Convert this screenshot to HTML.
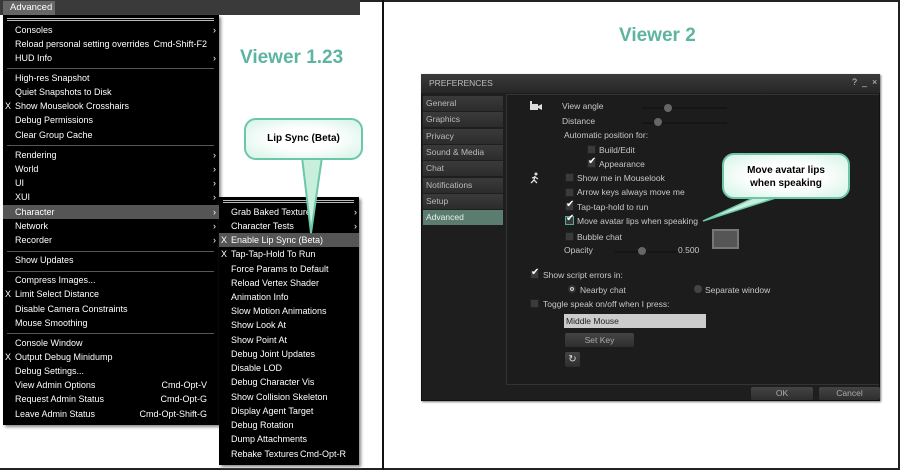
<!DOCTYPE html>
<html><head><meta charset="utf-8"><style>
*{margin:0;padding:0;box-sizing:border-box}
body{width:900px;height:470px;background:#fff;position:relative;overflow:hidden;font-family:"Liberation Sans",sans-serif}
.a{position:absolute}
.m{position:absolute;color:#fff;font-size:9px;line-height:14px;white-space:nowrap;top:0}
.r{position:absolute;color:#fff;font-size:9px;line-height:14px;white-space:nowrap;text-align:right}
.sep{position:absolute;height:1px;background:#555}
.p{position:absolute;color:#c8c8c8;font-size:8.5px;white-space:nowrap;line-height:11px}
.cb{position:absolute;width:9px;height:9px;background:#3a3a3a;border:1px solid #222}
.ck::after{content:"✔";position:absolute;left:0;top:-4px;color:#fff;font-size:10px}
.tab{position:absolute;left:423px;width:80px;height:15px;background:linear-gradient(#3a3a3a,#2c2c2c);color:#bbb;font-size:8.5px;line-height:15px;padding-left:3px}
.sl{position:absolute;height:2px;background:#151515}
.kn{position:absolute;width:8px;height:8px;border-radius:50%;background:#666}
.btn{position:absolute;background:linear-gradient(#444,#2e2e2e);color:#aaa;font-size:8.5px;text-align:center;border-radius:2px}
.v{position:absolute;color:#5db4a0;font-weight:bold}
.cl{position:absolute;border:2px solid #6cc7a8;border-radius:12px;background:radial-gradient(ellipse at center,#fff 40%,#d4f3e6 100%);font-weight:bold;font-size:10px;color:#000;text-align:center}
</style></head><body>
<div class="a" style="left:0;top:0;width:900px;height:470px;border:2px solid #222;border-left:none"></div>
<div class="a" style="left:382px;top:0;width:2px;height:470px;background:#111"></div>
<div class="a" style="left:0;top:0;width:360px;height:15px;background:#3a3a3a"></div>
<div class="a" style="left:3px;top:1px;width:52px;height:14px;background:#666;color:#fff;font-size:9.5px;line-height:14px;padding-left:7px">Advanced</div>
<div class="a" style="left:3px;top:15px;width:216px;height:410px;background:#000;box-shadow:2px 2px 3px #888"></div>
<div class="a" style="left:7px;top:18px;width:207px;height:3px;border-top:1px solid #bbb;border-bottom:1px solid #bbb"></div>
<div class="a" style="left:3px;top:205px;width:216px;height:14px;background:#555"></div>
<div class="sep" style="left:7px;top:68px;width:207px"></div>
<div class="sep" style="left:7px;top:145px;width:207px"></div>
<div class="sep" style="left:7px;top:251px;width:207px"></div>
<div class="sep" style="left:7px;top:271px;width:207px"></div>
<div class="sep" style="left:7px;top:333px;width:207px"></div>
<div class="m" style="left:15px;top:23px">Consoles</div>
<div class="m" style="left:15px;top:37px">Reload personal setting overrides</div>
<div class="r" style="right:693px;top:37px">Cmd-Shift-F2</div>
<div class="m" style="left:15px;top:51px">HUD Info</div>
<div class="m" style="left:15px;top:71px">High-res Snapshot</div>
<div class="m" style="left:15px;top:85px">Quiet Snapshots to Disk</div>
<div class="m" style="left:5px;top:99px">X</div><div class="m" style="left:15px;top:99px">Show Mouselook Crosshairs</div>
<div class="m" style="left:15px;top:113px">Debug Permissions</div>
<div class="m" style="left:15px;top:128px">Clear Group Cache</div>
<div class="m" style="left:15px;top:148px">Rendering</div>
<div class="m" style="left:15px;top:162px">World</div>
<div class="m" style="left:15px;top:176px">UI</div>
<div class="m" style="left:15px;top:190px">XUI</div>
<div class="m" style="left:15px;top:205px">Character</div>
<div class="m" style="left:15px;top:219px">Network</div>
<div class="m" style="left:15px;top:233px">Recorder</div>
<div class="m" style="left:15px;top:253px">Show Updates</div>
<div class="m" style="left:15px;top:273px">Compress Images...</div>
<div class="m" style="left:5px;top:287px">X</div><div class="m" style="left:15px;top:287px">Limit Select Distance</div>
<div class="m" style="left:15px;top:302px">Disable Camera Constraints</div>
<div class="m" style="left:15px;top:316px">Mouse Smoothing</div>
<div class="m" style="left:15px;top:336px">Console Window</div>
<div class="m" style="left:5px;top:350px">X</div><div class="m" style="left:15px;top:350px">Output Debug Minidump</div>
<div class="m" style="left:15px;top:364px">Debug Settings...</div>
<div class="m" style="left:15px;top:378px">View Admin Options</div>
<div class="m" style="left:15px;top:392px">Request Admin Status</div>
<div class="m" style="left:15px;top:407px">Leave Admin Status</div>
<div class="r" style="right:693px;top:378px">Cmd-Opt-V</div>
<div class="r" style="right:693px;top:392px">Cmd-Opt-G</div>
<div class="r" style="right:693px;top:407px">Cmd-Opt-Shift-G</div>
<div class="m" style="left:213px;top:23px">›</div><div class="m" style="left:213px;top:51px">›</div>
<div class="m" style="left:213px;top:148px">›</div><div class="m" style="left:213px;top:162px">›</div>
<div class="m" style="left:213px;top:176px">›</div><div class="m" style="left:213px;top:190px">›</div>
<div class="m" style="left:213px;top:205px">›</div><div class="m" style="left:213px;top:219px">›</div>
<div class="m" style="left:213px;top:233px">›</div>
<div class="a" style="left:219px;top:197px;width:140px;height:268px;background:#000;box-shadow:2px 2px 3px #888"></div>
<div class="a" style="left:223px;top:200px;width:131px;height:3px;border-top:1px solid #bbb;border-bottom:1px solid #bbb"></div>
<div class="a" style="left:219px;top:233px;width:140px;height:14px;background:#555"></div>
<div class="m" style="left:231px;top:205px">Grab Baked Texture</div>
<div class="m" style="left:231px;top:219px">Character Tests</div>
<div class="m" style="left:354px;top:205px">›</div><div class="m" style="left:354px;top:219px">›</div>
<div class="m" style="left:221px;top:233px">X</div><div class="m" style="left:231px;top:233px">Enable Lip Sync (Beta)</div>
<div class="m" style="left:221px;top:247px">X</div><div class="m" style="left:231px;top:247px">Tap-Tap-Hold To Run</div>
<div class="m" style="left:231px;top:262px">Force Params to Default</div>
<div class="m" style="left:231px;top:276px">Reload Vertex Shader</div>
<div class="m" style="left:231px;top:290px">Animation Info</div>
<div class="m" style="left:231px;top:304px">Slow Motion Animations</div>
<div class="m" style="left:231px;top:318px">Show Look At</div>
<div class="m" style="left:231px;top:333px">Show Point At</div>
<div class="m" style="left:231px;top:347px">Debug Joint Updates</div>
<div class="m" style="left:231px;top:361px">Disable LOD</div>
<div class="m" style="left:231px;top:375px">Debug Character Vis</div>
<div class="m" style="left:231px;top:390px">Show Collision Skeleton</div>
<div class="m" style="left:231px;top:404px">Display Agent Target</div>
<div class="m" style="left:231px;top:418px">Debug Rotation</div>
<div class="m" style="left:231px;top:432px">Dump Attachments</div>
<div class="m" style="left:231px;top:447px">Rebake Textures</div>
<div class="r" style="right:554px;top:447px">Cmd-Opt-R</div>
<div class="v" style="left:240px;top:47px;font-size:19px">Viewer 1.23</div>
<div class="v" style="left:619px;top:25px;font-size:19px">Viewer 2</div>
<svg class="a" style="left:240px;top:115px" width="130" height="125"><polygon points="62,42 82,42 71,118" fill="#c8eedc" stroke="#6cc7a8" stroke-width="2"/></svg>
<div class="cl" style="left:244px;top:118px;width:119px;height:42px;line-height:38px">Lip Sync (Beta)</div>
<div class="a" style="left:421px;top:74px;width:459px;height:327px;background:#1e1e1e;border:1px solid #111;box-shadow:1px 1px 2px #777"></div>
<div class="a" style="left:421px;top:74px;width:459px;height:19px;background:linear-gradient(#3a3a3a,#262626)"></div>
<div class="p" style="left:429px;top:78px;color:#bbb">PREFERENCES</div>
<div class="p" style="left:852px;top:77px;color:#ccc;font-size:9px">?&nbsp; _&nbsp; ×</div>
<div class="a" style="left:506px;top:94px;width:373px;height:290px;border-left:1px solid #333;border-top:1px solid #333;background:#1c1c1c"></div>
<div class="tab" style="top:96px">General</div>
<div class="tab" style="top:112px">Graphics</div>
<div class="tab" style="top:129px">Privacy</div>
<div class="tab" style="top:145px">Sound &amp; Media</div>
<div class="tab" style="top:161px">Chat</div>
<div class="tab" style="top:178px">Notifications</div>
<div class="tab" style="top:194px">Setup</div>
<div class="tab" style="top:210px;background:#5a7d6f;color:#eee">Advanced</div>
<svg class="a" style="left:529px;top:101px" width="14" height="10"><rect x="1" y="3" width="8" height="6" fill="#ddd"/><polygon points="9,5 13,3 13,9 9,7" fill="#ddd"/><rect x="1" y="0" width="2" height="3" fill="#ddd"/></svg>
<svg class="a" style="left:530px;top:172px" width="10" height="12"><circle cx="6" cy="2" r="1.5" fill="#ddd"/><path d="M5 4 L4 8 L1 11 M4 8 L7 11 M5 5 L8 7 M5 5 L2 6" stroke="#ddd" stroke-width="1.3" fill="none"/></svg>
<div class="p" style="left:562px;top:101px">View angle</div>
<div class="p" style="left:562px;top:116px">Distance</div>
<div class="sl" style="left:642px;top:107px;width:85px"></div><div class="kn" style="left:664px;top:104px"></div>
<div class="sl" style="left:642px;top:122px;width:85px"></div><div class="kn" style="left:654px;top:118px"></div>
<div class="p" style="left:564px;top:130px">Automatic position for:</div>
<div class="cb" style="left:587px;top:145px"></div><div class="p" style="left:599px;top:145px">Build/Edit</div>
<div class="cb ck" style="left:587px;top:159px"></div><div class="p" style="left:599px;top:159px">Appearance</div>
<div class="cb" style="left:565px;top:173px"></div><div class="p" style="left:577px;top:173px">Show me in Mouselook</div>
<div class="cb" style="left:565px;top:188px"></div><div class="p" style="left:577px;top:187px">Arrow keys always move me</div>
<div class="cb ck" style="left:565px;top:202px"></div><div class="p" style="left:577px;top:202px">Tap-tap-hold to run</div>
<div class="cb ck" style="left:565px;top:216px;border-color:#5a9"></div><div class="p" style="left:577px;top:216px">Move avatar lips when speaking</div>
<div class="cb" style="left:565px;top:232px"></div><div class="p" style="left:577px;top:232px">Bubble chat</div>
<div class="p" style="left:564px;top:245px">Opacity</div>
<div class="sl" style="left:615px;top:251px;width:70px"></div><div class="kn" style="left:638px;top:247px"></div>
<div class="p" style="left:678px;top:245px">0.500</div>
<div class="a" style="left:712px;top:229px;width:27px;height:20px;background:#555;border:2px solid #777"></div>
<div class="cb ck" style="left:530px;top:270px"></div><div class="p" style="left:543px;top:270px">Show script errors in:</div>
<div class="a" style="left:568px;top:285px;width:8px;height:8px;border-radius:50%;background:#444;border:2px solid #333;box-shadow:inset 0 0 0 1px #ddd"></div>
<div class="p" style="left:580px;top:285px">Nearby chat</div>
<div class="a" style="left:694px;top:285px;width:8px;height:8px;border-radius:50%;background:#444"></div>
<div class="p" style="left:705px;top:285px">Separate window</div>
<div class="cb" style="left:530px;top:299px"></div><div class="p" style="left:543px;top:299px">Toggle speak on/off when I press:</div>
<div class="a" style="left:564px;top:314px;width:142px;height:14px;background:#ccc;color:#222;font-size:8.5px;line-height:14px;padding-left:2px">Middle Mouse</div>
<div class="btn" style="left:565px;top:333px;width:69px;height:14px;line-height:14px">Set Key</div>
<div class="btn" style="left:565px;top:352px;width:15px;height:15px;line-height:15px;color:#ddd;font-size:10px">↻</div>
<div class="a" style="left:506px;top:384px;width:373px;height:1px;background:#333"></div>
<div class="btn" style="left:751px;top:387px;width:62px;height:13px;line-height:13px">OK</div>
<div class="btn" style="left:819px;top:387px;width:61px;height:13px;line-height:13px">Cancel</div>
<svg class="a" style="left:695px;top:150px" width="160" height="80"><polygon points="65,45 90,45 8,71" fill="#c8eedc" stroke="#6cc7a8" stroke-width="1.5"/></svg>
<div class="cl" style="left:722px;top:153px;width:128px;height:46px;padding-top:9px;line-height:13px">Move avatar lips<br>when speaking</div>
</body></html>
